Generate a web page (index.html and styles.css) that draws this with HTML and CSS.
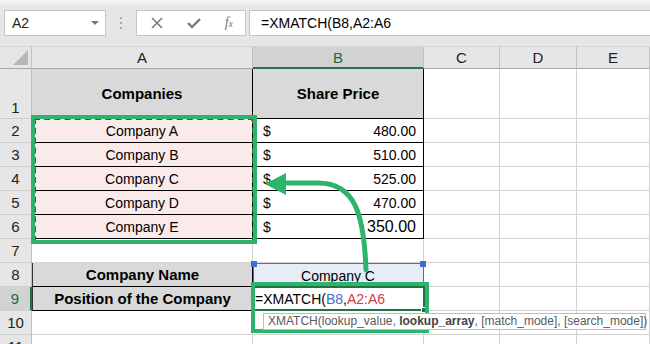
FILE: index.html
```html
<!DOCTYPE html>
<html>
<head>
<meta charset="utf-8">
<link rel="stylesheet" href="styles.css">
</head>
<body>
<div class="app">
  <div class="fbar">
    <div class="namebox"><span>A2</span><span class="dd"></span></div>
    <div class="dots"><i></i><i></i><i></i></div>
    <div class="btns">
      <svg class="ic" width="14" height="14" viewBox="0 0 14 14"><path d="M2 2 L12 12 M12 2 L2 12" stroke="#7a7a7a" stroke-width="1.6" fill="none"/></svg>
      <svg class="ic" width="16" height="14" viewBox="0 0 16 14"><path d="M2 7 L6 11 L14 3" stroke="#7a7a7a" stroke-width="2.4" fill="none"/></svg>
      <span class="fx">f<sub>x</sub></span>
    </div>
    <div class="formula">=XMATCH(B8,A2:A6</div>
  </div>
  <div class="sheetwrap">
    <div class="sheet">
      <div class="corner"><span class="tri"></span></div>
      <div class="ch">A</div>
      <div class="ch sel">B</div>
      <div class="ch">C</div>
      <div class="ch">D</div>
      <div class="ch">E</div>

      <div class="rh r1">1</div>
      <div class="c t hd">Companies</div>
      <div class="c t hd">Share Price</div>
      <div class="c"></div><div class="c"></div><div class="c"></div>

      <div class="rh">2</div>
      <div class="c t pk">Company A</div>
      <div class="c t num"><span>$</span><span>480.00</span></div>
      <div class="c"></div><div class="c"></div><div class="c"></div>

      <div class="rh">3</div>
      <div class="c t pk">Company B</div>
      <div class="c t num"><span>$</span><span>510.00</span></div>
      <div class="c"></div><div class="c"></div><div class="c"></div>

      <div class="rh">4</div>
      <div class="c t pk">Company C</div>
      <div class="c t num"><span>$</span><span>525.00</span></div>
      <div class="c"></div><div class="c"></div><div class="c"></div>

      <div class="rh">5</div>
      <div class="c t pk">Company D</div>
      <div class="c t num"><span>$</span><span>470.00</span></div>
      <div class="c"></div><div class="c"></div><div class="c"></div>

      <div class="rh">6</div>
      <div class="c t pk">Company E</div>
      <div class="c t num"><span>$</span><span class="big">350.00</span></div>
      <div class="c"></div><div class="c"></div><div class="c"></div>

      <div class="rh">7</div>
      <div class="c"></div><div class="c"></div>
      <div class="c"></div><div class="c"></div><div class="c"></div>

      <div class="rh">8</div>
      <div class="c t hd lab">Company Name</div>
      <div class="c b8">Company C</div>
      <div class="c"></div><div class="c"></div><div class="c"></div>

      <div class="rh sel">9</div>
      <div class="c t hd lab">Position of the Company</div>
      <div class="c b9">=XMATCH(<span class="blue">B8</span>,<span class="red">A2:A6</span></div>
      <div class="c"></div><div class="c"></div><div class="c"></div>

      <div class="rh">10</div>
      <div class="c"></div><div class="c"></div>
      <div class="c"></div><div class="c"></div><div class="c"></div>

      <div class="rh">11</div>
      <div class="c"></div><div class="c"></div>
      <div class="c"></div><div class="c"></div><div class="c"></div>
    </div>

    <div class="marquee"></div>
    <div class="reddot"></div>
    <div class="gbox gbox-a"></div>
    <div class="range"><i class="h hl"></i><i class="h hr"></i></div>
    <div class="active"><i class="fill"></i></div>
    <div class="gbox gbox-b"></div>
    <div class="tip">XMATCH(lookup_value, <b>lookup_array</b>, [match_mode], [search_mode])</div>
    <svg class="arrow" width="650" height="300" viewBox="0 0 650 300">
      <path d="M366 224 C 364 170, 356 137, 318 137 L 282 137" stroke="#2db36b" stroke-width="5" fill="none" stroke-linecap="round"/>
      <path d="M265 138 L 286 127 L 286 149 Z" fill="#2db36b"/>
    </svg>
  </div>
</div>
</body>
</html>
```
FILE: styles.css
```css
* { box-sizing: border-box; }
html, body { margin: 0; padding: 0; }
body { width: 650px; height: 344px; overflow: hidden; background: #fff; font-family: "Liberation Sans", Arial, sans-serif; }
.app { width: 650px; height: 344px; overflow: hidden; }

.fbar {
  height: 46px;
  background: linear-gradient(#f7f7f7 0px, #e6e6e6 6px, #e6e6e6 100%);
  display: flex;
  align-items: flex-start;
  padding: 10px 0 0 4px;
}
.namebox {
  width: 102px; height: 26px;
  background: #fff; border: 1px solid #c6c6c6;
  display: flex; align-items: center; justify-content: space-between;
  padding: 0 6px 0 7px;
  font-size: 14px; color: #222;
}
.dd { width: 0; height: 0; border-left: 4px solid transparent; border-right: 4px solid transparent; border-top: 4px solid #777; }
.dots { width: 30px; height: 26px; display: flex; flex-direction: column; align-items: center; justify-content: center; gap: 3px; }
.dots i { width: 2px; height: 2px; background: #a8a8a8; display: block; }
.btns {
  width: 110px; height: 26px; background: #fff; border: 1px solid #c6c6c6;
  display: flex; align-items: center; justify-content: space-between; padding: 0 12px 0 13px;
}
.fx { font-family: "Liberation Serif", serif; font-style: italic; color: #777; font-size: 14px; }
.fx sub { font-size: 10px; vertical-align: 0; }
.formula {
  margin-left: 3px; flex: 1; height: 26px; background: #fff; border: 1px solid #c6c6c6; border-right: none;
  display: flex; align-items: center; padding-left: 11px; font-size: 14px; color: #000;
}

.sheetwrap { position: relative; }
.sheet {
  display: grid;
  grid-template-columns: 32px 221px 171px 76px 77px 73px;
  grid-template-rows: 23px 50px repeat(10, 24px);
}
.corner { background: #e6e6e6; border-right: 1px solid #c2c2c2; border-bottom: 1px solid #a6a6a6; border-top: 1px solid #d6d6d6; position: relative; }
.tri { position: absolute; right: 3px; bottom: 3px; width: 0; height: 0; border-left: 15px solid transparent; border-bottom: 15px solid #b7b7b7; }
.ch {
  background: #e6e6e6; border-right: 1px solid #c2c2c2; border-bottom: 1px solid #a6a6a6; border-top: 1px solid #d6d6d6;
  display: flex; align-items: center; justify-content: center; font-size: 15px; color: #222;
}
.ch.sel { background: #d2d2d2; color: #1e6b40; border-bottom: 2px solid #217346; }
.rh {
  background: #e6e6e6; border-right: 1px solid #bdbdbd; border-bottom: 1px solid #cfcfcf;
  display: flex; align-items: center; justify-content: center; font-size: 15px; color: #222;
}
.rh.r1 { align-items: flex-end; padding-bottom: 2px; }
.rh.sel { background: #d2d2d2; color: #1e6b40; border-right: 2px solid #217346; }

.c { border-right: 1px solid #d4d4d4; border-bottom: 1px solid #d4d4d4; font-size: 14px; color: #000; }
.c.t { border-right-color: #000; border-bottom-color: #000; }
.hd { background: #d9d9d9; font-weight: bold; font-size: 15px; display: flex; align-items: center; justify-content: center; }
.lab { border-left: 1px solid #333; }
.pk { background: #fbeaea; display: flex; align-items: center; justify-content: center; }
.num { display: flex; align-items: center; justify-content: space-between; padding: 0 7px 0 10px; }
.num .big { font-size: 16px; }
.b8 { background: #e7edf7; display: flex; align-items: center; justify-content: center; padding-top: 3px; }
.b9 { display: flex; align-items: center; padding-left: 2px; font-size: 14px; }
.blue { color: #3d6fd3; }
.red { color: #d0394a; }

.marquee { position: absolute; left: 34px; top: 72px; width: 220px; height: 124px; border: 2px dashed #1f6e43; }
.reddot { position: absolute; left: 251px; top: 73px; width: 2px; height: 2px; background: #d33; }
.gbox { position: absolute; border: 4px solid #2db36b; }
.gbox-a { left: 31px; top: 69px; width: 226px; height: 129px; }
.gbox-b { left: 251px; top: 236px; width: 178px; height: 51px; }
.range { position: absolute; left: 253px; top: 217px; width: 171px; height: 25px; border: 1px solid #3d6fd3; }
.h { position: absolute; width: 6px; height: 6px; background: #3d6fd3; top: -3px; display: block; }
.hl { left: -3px; }
.hr { right: -3px; }
.active { position: absolute; left: 252px; top: 240px; width: 173px; height: 25px; border: 2px solid #217346; }
.fill { position: absolute; right: -4px; bottom: -4px; width: 6px; height: 6px; background: #217346; border: 1px solid #fff; display: block; }
.tip {
  position: absolute; left: 263px; top: 267px; width: 383px; height: 17px;
  background: #fff; border: 1px solid #bcbcbc; color: #5a5a5a;
  font-size: 12px; line-height: 15px; padding-left: 4px; white-space: nowrap;
}
.tip b { color: #444; }
.arrow { position: absolute; left: 0; top: 0; pointer-events: none; }
```
